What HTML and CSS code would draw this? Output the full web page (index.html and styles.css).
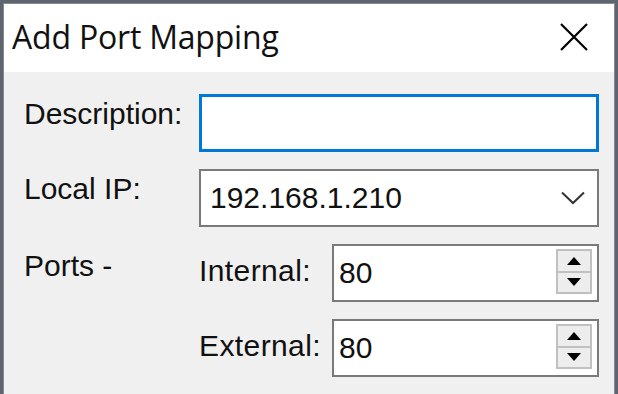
FILE: index.html
```html
<!DOCTYPE html>
<html>
<head>
<meta charset="utf-8">
<link rel="stylesheet" href="styles.css">
</head>
<body>
<div class="window">
  <div class="titlebar">
    <span class="title">Add Port Mapping</span>
    <svg class="close" width="30" height="30" viewBox="0 0 30 30"><path d="M2 2 L28 28 M28 2 L2 28" stroke="#000" stroke-width="2.2" fill="none"/></svg>
  </div>
  <div class="content">
    <div class="row">
      <label class="lbl">Description:</label>
      <div class="field focused"></div>
    </div>
    <div class="row">
      <label class="lbl">Local IP:</label>
      <div class="field combo">
        <span class="val">192.168.1.210</span>
        <svg class="chev" width="24" height="14" viewBox="0 0 24 14"><path d="M1 1.5 L12 12 L23 1.5" stroke="#333" stroke-width="2" fill="none"/></svg>
      </div>
    </div>
    <div class="row">
      <label class="lbl ports">Ports -</label>
      <div class="sub">
        <label class="lbl2">Internal:</label>
        <div class="field spin">
          <span class="val">80</span>
          <div class="spinbtns">
            <div class="sb"><svg width="14" height="8" viewBox="0 0 14 8"><path d="M7 0 L14 8 L0 8 Z" fill="#000"/></svg></div>
            <div class="sb"><svg width="14" height="8" viewBox="0 0 14 8"><path d="M0 0 L14 0 L7 8 Z" fill="#000"/></svg></div>
          </div>
        </div>
      </div>
    </div>
    <div class="row">
      <span class="lbl"></span>
      <div class="sub">
        <label class="lbl2">External:</label>
        <div class="field spin">
          <span class="val">80</span>
          <div class="spinbtns">
            <div class="sb"><svg width="14" height="8" viewBox="0 0 14 8"><path d="M7 0 L14 8 L0 8 Z" fill="#000"/></svg></div>
            <div class="sb"><svg width="14" height="8" viewBox="0 0 14 8"><path d="M0 0 L14 0 L7 8 Z" fill="#000"/></svg></div>
          </div>
        </div>
      </div>
    </div>
  </div>
</div>
</body>
</html>
```
FILE: styles.css
```css
* { box-sizing: border-box; }
html, body { margin: 0; height: 100%; }
body {
  background: #5d6670;
  padding: 3px 3px 0 3px;
  font-family: "Liberation Sans", Arial, sans-serif;
  overflow: hidden;
}
.window {
  height: 100%;
  border: 1px solid #8a8a8a;
  border-bottom: none;
  background: #f0f0f0;
  display: flex;
  flex-direction: column;
}
.titlebar {
  height: 68px;
  background: #fff;
  display: flex;
  align-items: center;
  justify-content: space-between;
  padding: 0 25px 0 8px;
}
.title {
  font-family: "Open Sans", "Noto Sans", sans-serif;
  font-size: 32px;
  color: #111;
  margin-top: -4px;
  letter-spacing: -0.2px;
}
.close { margin-top: -2px; }
.content {
  padding: 22px 15px 0 20px;
  display: flex;
  flex-direction: column;
  gap: 17px;
}
.row {
  display: grid;
  grid-template-columns: 175px 1fr;
  align-items: start;
}
.lbl, .lbl2 {
  font-size: 30px;
  color: #111;
  line-height: 32px;
  padding-top: 4px;
}
.lbl.ports { padding-top: 6px; }
.sub {
  display: grid;
  grid-template-columns: 133px 1fr;
  align-items: start;
}
.lbl2 { padding-top: 11px; letter-spacing: 0.4px; }
.field {
  height: 58px;
  background: #fff;
  border: 2px solid #7a7a7a;
  display: flex;
  align-items: center;
}
.field.focused { border: 3px solid #0078d7; }
.val {
  font-size: 30px;
  padding-left: 9px;
  flex: 1;
  color: #111;
}
.chev { margin-right: 12px; }
.spin .val { padding-left: 5px; }
.spinbtns {
  display: flex;
  flex-direction: column;
  width: 36px;
  height: 45px;
  margin-right: 5px;
  align-self: flex-start;
  margin-top: 3px;
}
.sb {
  flex: 1;
  background: #ededed;
  border: 2px solid #c0c0c0;
  display: flex;
  align-items: center;
  justify-content: center;
}
.sb + .sb { margin-top: -2px; }
```
